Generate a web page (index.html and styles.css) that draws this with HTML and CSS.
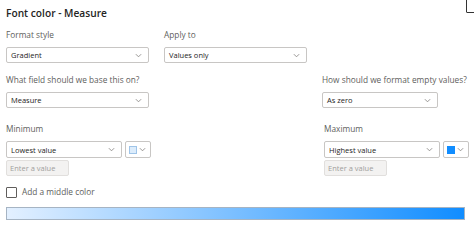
FILE: index.html
```html
<!DOCTYPE html>
<html lang="en">
<head>
  <meta charset="UTF-8" />
  <title>Font color - Measure</title>
  <link rel="stylesheet" href="styles.css">
</head>
<body>
  <span class="corner-btn"></span>

  <div class="panel">
    <h1>Font color - Measure</h1>

    <div class="row">
      <div class="field">
        <label>Format style</label>
        <div class="dropdown">Gradient<svg viewBox="0 0 8 5"><path d="M1 1l3 3 3-3"/></svg></div>
      </div>
      <div class="field">
        <label>Apply to</label>
        <div class="dropdown">Values only<svg viewBox="0 0 8 5"><path d="M1 1l3 3 3-3"/></svg></div>
      </div>
    </div>

    <div class="row row-wide row-base">
      <div class="field">
        <label>What field should we base this on?</label>
        <div class="dropdown">Measure<svg viewBox="0 0 8 5"><path d="M1 1l3 3 3-3"/></svg></div>
      </div>
      <div class="field field-short">
        <label>How should we format empty values?</label>
        <div class="dropdown">As zero<svg viewBox="0 0 8 5"><path d="M1 1l3 3 3-3"/></svg></div>
      </div>
    </div>

    <div class="row row-wide row-minmax">
      <div class="field">
        <label>Minimum</label>
        <div class="pick">
          <div class="dropdown dropdown-value">Lowest value<svg viewBox="0 0 8 5"><path d="M1 1l3 3 3-3"/></svg></div>
          <div class="color-btn"><span class="swatch swatch-min"></span><svg viewBox="0 0 8 5"><path d="M1 1l3 3 3-3"/></svg></div>
        </div>
        <div class="value-input">Enter a value</div>
      </div>
      <div class="field">
        <label>Maximum</label>
        <div class="pick">
          <div class="dropdown dropdown-value">Highest value<svg viewBox="0 0 8 5"><path d="M1 1l3 3 3-3"/></svg></div>
          <div class="color-btn"><span class="swatch swatch-max"></span><svg viewBox="0 0 8 5"><path d="M1 1l3 3 3-3"/></svg></div>
        </div>
        <div class="value-input">Enter a value</div>
      </div>
    </div>

    <label class="check"><span class="box"></span>Add a middle color</label>

    <div class="gradient-bar"></div>
  </div>
</body>
</html>
```

FILE: styles.css
```css
body {
  margin: 0;
  background: #fff;
  font-family: 'Open Sans', 'Noto Sans', sans-serif;
  color: #605e5c;
}

.panel {
  padding: 5px 6px 0;
}

h1 {
  margin: 0 0 8px;
  font-size: 10.2px;
  font-weight: 600;
  color: #252423;
  line-height: 16px;
}

.row {
  display: flex;
  gap: 15px;
  margin-bottom: 11px;
}

.row-wide {
  gap: 173px;
}

.row-base {
  margin-bottom: 15px;
}

.field {
  display: flex;
  flex-direction: column;
  width: 143px;
}

.field-short {
  width: 116px;
}

.row-minmax .field {
  width: 145px;
}

label {
  display: block;
  font-size: 8.3px;
  line-height: 12px;
  margin-bottom: 6px;
  color: #605e5c;
  white-space: nowrap;
}

.dropdown {
  height: 16px;
  box-sizing: border-box;
  border: 1px solid #c8c6c4;
  border-radius: 2px;
  display: flex;
  align-items: center;
  justify-content: space-between;
  padding: 0 6px 0 4px;
  font-size: 7.5px;
  color: #252423;
}

.dropdown svg, .color-btn svg {
  width: 7px;
  height: 5px;
  fill: none;
  stroke: #8a8886;
  stroke-width: 1;
}

.pick {
  display: flex;
  gap: 3px;
}

.dropdown-value {
  width: 116px;
  height: 17px;
}

.color-btn {
  width: 26px;
  height: 17px;
  box-sizing: border-box;
  border: 1px solid #c8c6c4;
  border-radius: 2px;
  display: flex;
  align-items: center;
  justify-content: space-between;
  padding: 0 4px 0 3px;
}

.swatch {
  width: 8px;
  height: 8px;
  box-sizing: border-box;
}

.swatch-min {
  background: #dcecfb;
  border: 1px solid #9fc4e8;
}

.swatch-max {
  background: #118dff;
}

.value-input {
  width: 63px;
  height: 16px;
  box-sizing: border-box;
  margin-top: 2px;
  background: #f3f2f1;
  border: 1px solid #e1dfdd;
  border-radius: 2px;
  font-size: 7.5px;
  line-height: 14px;
  padding-left: 3px;
  color: #a19f9d;
}

.check {
  display: flex;
  align-items: center;
  gap: 5px;
  margin: -1px 0 9px;
  color: #605e5c;
}

.check .box {
  width: 11px;
  height: 11px;
  box-sizing: border-box;
  border: 1px solid #605e5c;
  border-radius: 1px;
}

.gradient-bar {
  width: 459px;
  height: 13px;
  box-sizing: border-box;
  border: 1px solid #a6b4c3;
  background: linear-gradient(to right, #e3f0ff, #118dff);
}

/* window button cut off at the corner */
.corner-btn {
  position: absolute;
  top: -2px;
  right: -4px;
  width: 10px;
  height: 13px;
  border: 1px solid #333;
  border-radius: 1px;
}
```
